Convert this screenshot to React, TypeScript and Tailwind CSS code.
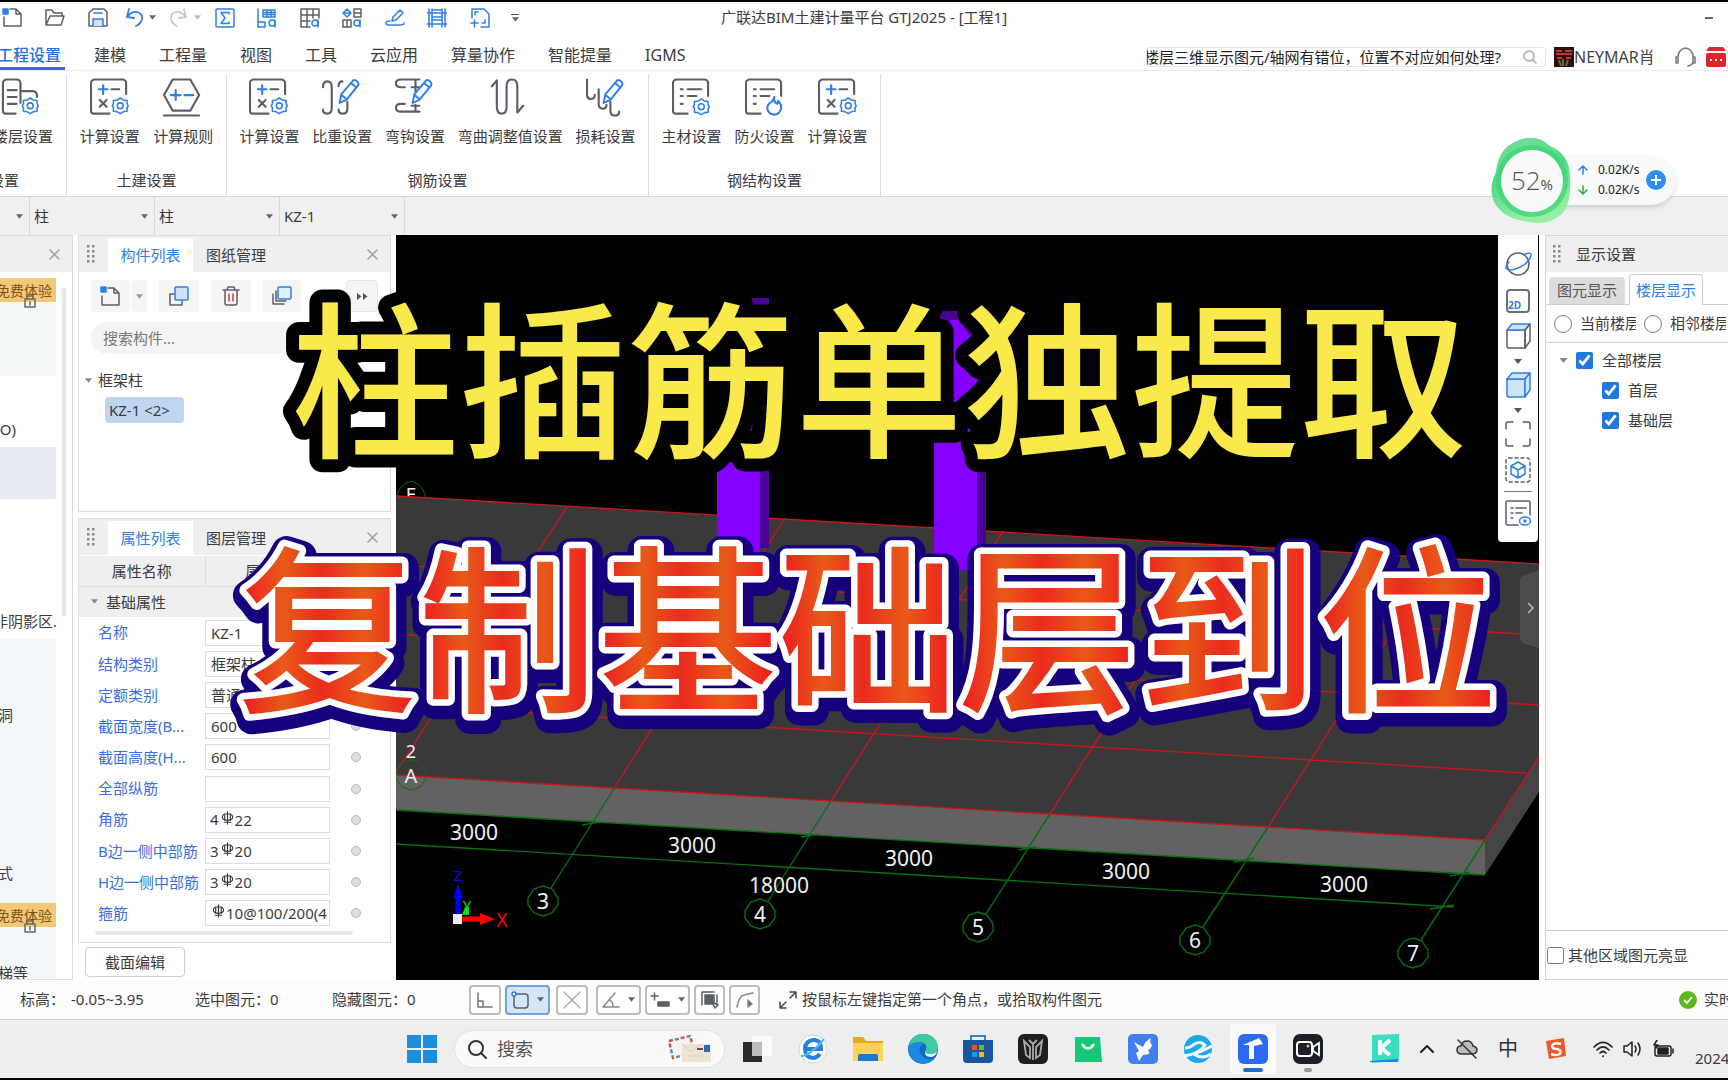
import React from "react";

type P = { children?: React.ReactNode };

const FONT = "font-['Noto_Sans','Noto_Sans_CJK_SC',sans-serif]";

function Ico({ w = 20, h = 20, vb, children, c = "#5b6068", sw = 1.5, cls = "" }: P & { w?: number; h?: number; vb?: string; c?: string; sw?: number; cls?: string }) {
  return (
    <svg width={w} height={h} viewBox={vb ?? `0 0 ${w} ${h}`} fill="none" stroke={c} strokeWidth={sw} strokeLinecap="round" strokeLinejoin="round" className={`shrink-0 ${cls}`} aria-hidden="true">
      {children}
    </svg>
  );
}

const BLUE = "#2f80e4";

function Caret({ c = "#666", w = 7 }: { c?: string; w?: number }) {
  return (
    <svg width={w} height={5} viewBox="0 0 8 5" className="shrink-0" aria-hidden="true">
      <path d="M0 0h8L4 5z" fill={c} />
    </svg>
  );
}

function Gear({ x, y }: { x: number; y: number }) {
  return (
    <g transform={`translate(${x} ${y})`} stroke={BLUE} strokeWidth="1.6">
      <path d="M0-8l3 2 4 .5 0 3.5 1.2 2L7 2v3.500l-4 .7L0 8l-3-1.800-4-.7V2L-8.200 0-7-2v-3.500l4-.5z" />
      <circle r="3" />
    </g>
  );
}

function Pencil() {
  return (
    <g stroke={BLUE} strokeWidth="2">
      <path d="M18 25l2-9L32 2q2-1 4 1 2 2 1 4L25 22z" fill="#fff" />
      <path d="M30 5l5 4M20 17l5 4" />
    </g>
  );
}

function RibbonIcon({ kind }: { kind: string }) {
  let body: React.ReactNode = null;
  if (kind === "calc")
    body = (
      <>
        <path d="M20 36H4a3 3 0 0 1-3-3V5a4 4 0 0 1 4-4h28a4 4 0 0 1 4 4v11" />
        <path d="M9 11h9M13.500 7v9" stroke={BLUE} />
        <path d="M22 11h8M10 22l7 7M17 22l-7 7" />
        <Gear x={31} y={28} />
      </>
    );
  if (kind === "rule")
    body = (
      <>
        <path d="M10 1h18l9 16-9 16H10L1 17zM1 38h36" />
        <path d="M8 17h10M13 12v10M22 17h9" stroke={BLUE} />
      </>
    );
  if (kind === "floor")
    body = (
      <>
        <path d="M16 36H6a3 3 0 0 1-3-3V5a4 4 0 0 1 4-4h10a4 4 0 0 1 4 4v20M21 13h13q4 0 4 6M8 12h9M8 19h9M8 26h9" />
        <Gear x={31} y={28} />
      </>
    );
  if (kind === "weight")
    body = (
      <>
        <path d="M1 9q0-6 4.500-6T10 9v21q0 6-4.500 6T1 32M17 8q0-5 4-5M26 24v7q0 5-4.500 5T17 32" />
        <Pencil />
      </>
    );
  if (kind === "hook")
    body = (
      <>
        <path d="M10 9H6Q1 9 1 5t5-4h19M21 2v11M10 26H6q-5 0-5 4t5 4h19M21 27v7M17 9h8M17 28h8" />
        <Pencil />
      </>
    );
  if (kind === "bend")
    body = <path d="M2 8l5-6v27q0 7 5 7t5-7V8q0-7 5.500-7T28 8v27l6-7" />;
  if (kind === "loss")
    body = (
      <>
        <path d="M1 1v15q0 5 4 5t4-4M13 11v15q0 5 4 5t4-4M25 24v9q0 5 4.500 5T34 34" />
        <Pencil />
      </>
    );
  if (kind === "main" || kind === "fire")
    body = (
      <>
        <path d="M16 36H4a3 3 0 0 1-3-3V5a4 4 0 0 1 4-4h28a4 4 0 0 1 4 4v13M9 11h2M16 11h14M9 18h2M16 18h9M9 26h2" />
        {kind === "main" ? <Gear x={30} y={29} /> : <path d="M30 19q-1 5 3 7 1-1 1-3 4 4 3 8-2 6-7 6t-7-5q-1-5 4-8 3-2 3-5z" stroke={BLUE} />}
      </>
    );
  return (
    <Ico w={40} h={39} vb="0 0 41 39" sw={2.2}>
      {body}
    </Ico>
  );
}

function RibbonGroup({ title, items, cls }: { title: string; items: [string, string][]; cls: string }) {
  return (
    <div className={`flex shrink-0 flex-col border-r border-[#dcdcdc] ${cls}`}>
      <div className="flex">
        {items.map(([k, t]) => (
          <button key={t} className="flex shrink-0 grow flex-col items-center gap-[7px]">
            <RibbonIcon kind={k} />
            <span className="whitespace-nowrap text-[15px] leading-6">{t}</span>
          </button>
        ))}
      </div>
      <div className="mt-5 text-center text-[15px] leading-6">{title}</div>
    </div>
  );
}

function Combo({ v, cls, label }: { v: string; cls: string; label: string }) {
  return (
    <div className={`relative flex h-full items-center border-r border-[#dadada] ${cls}`}>
      <select aria-label={label} className="h-full w-full appearance-none bg-transparent pl-1 text-[15px] outline-none">
        <option>{v}</option>
      </select>
      <span className="pointer-events-none absolute right-1.5">
        <Caret />
      </span>
    </div>
  );
}

function Dots() {
  return (
    <svg width="9" height="18" viewBox="0 0 9 18" fill="#8a8a8a" className="shrink-0" aria-hidden="true">
      {[0, 5, 10, 15].map((y) => (
        <g key={y}>
          <rect x="0" y={y} width="2.500" height="2.500" />
          <rect x="5" y={y} width="2.500" height="2.500" />
        </g>
      ))}
    </svg>
  );
}

function Close() {
  return (
    <button aria-label="关闭" className="p-1">
      <Ico w={11} h={11} c="#a3a3a3" sw={1.6}>
        <path d="M1 1l9 9M10 1l-9 9" />
      </Ico>
    </button>
  );
}

function PanelHeader({ a, b }: { a: string; b: string }) {
  return (
    <div className="flex h-9 shrink-0 items-center bg-[#efeff0] pl-2 pr-2">
      <Dots />
      <div className="ml-3 flex h-full grow pt-0.5">
        <button className="w-[85px] bg-white text-[15px] text-[#2f80e4]">{a}</button>
        <button className="w-[86px] text-[15px]">{b}</button>
      </div>
      <Close />
    </div>
  );
}

function Rebar() {
  return (
    <Ico w={13} h={14} vb="0 0 13 15" sw={1.2} c="#333" cls="mb-1 ml-0.5">
      <path d="M6.500 1v13M3.500 3v7M9.500 3v7M6.500 3q-5.500 0-5.500 3.500T6.500 10 12 6.500 6.500 3zM3 12h7" />
    </Ico>
  );
}

const PROPS: [string, string, string, boolean, boolean][] = [
  ["名称", "", "KZ-1", false, false],
  ["结构类别", "", "框架柱", false, false],
  ["定额类别", "", "普通柱", false, false],
  ["截面宽度(B...", "", "600", false, true],
  ["截面高度(H...", "", "600", false, true],
  ["全部纵筋", "", "", false, true],
  ["角筋", "4", "22", true, true],
  ["B边一侧中部筋", "3", "20", true, true],
  ["H边一侧中部筋", "3", "20", true, true],
  ["箍筋", "", "10@100/200(4", true, true],
];

function TrialBadge() {
  return (
    <div className="relative flex h-6 w-14 shrink-0 items-center justify-end bg-[#f0c878] pr-1 text-[#7d5414]">
      <span className="shrink-0 whitespace-nowrap text-[14px]">免费体验</span>
      <Ico w={12} h={14} cls="absolute left-6 top-4" c="#666">
        <path d="M1 5h10v8H1zM3 5V2h6v3M6 8v3" />
      </Ico>
    </div>
  );
}

function ClipText({ t, cls }: { t: string; cls: string }) {
  return (
    <div className={`flex shrink-0 items-center justify-end overflow-hidden whitespace-nowrap text-[15px] ${cls}`}>
      <span className="shrink-0">{t}</span>
    </div>
  );
}

function LeftStrip() {
  return (
    <aside className="flex w-[73px] shrink-0 flex-col overflow-hidden border-b border-r border-t border-[#dcdcdc]">
      <div className="flex h-9 shrink-0 items-center justify-end bg-[#efeff0] pr-2">
        <Close />
      </div>
      <div className="relative flex grow flex-col overflow-hidden pt-1.5">
        <div className="absolute left-[62px] top-4 h-82 w-1 bg-[#e6e6e6]" />
        <TrialBadge />
        <div className="h-[74px] w-14 shrink-0 bg-[#f3f7f8]" />
        <ClipText t="(ISO)" cls="mt-[35px] h-9 w-4" />
        <div className="h-[52px] w-14 shrink-0 bg-[#e8ecf2]" />
        <ClipText t="非阴影区." cls="mt-[110px] h-6 w-[57px]" />
        <div className="mt-1.5 flex w-14 grow flex-col bg-[#f4f7f9]">
          <ClipText t="洞" cls="mt-[62px] h-7 w-[13px]" />
          <ClipText t="式" cls="mt-[130px] h-7 w-[13px]" />
          <div className="mt-4 h-[50px] shrink-0">
            <TrialBadge />
          </div>
          <ClipText t="楼梯等" cls="mt-2 h-6 w-7" />
        </div>
      </div>
    </aside>
  );
}

const TB = "flex h-8 items-center justify-center rounded-sm bg-[#f5f5f5]";

function ComponentPanel() {
  return (
    <section className="flex h-[277px] shrink-0 flex-col border border-[#dcdcdc] bg-white">
      <PanelHeader a="构件列表" b="图纸管理" />
      <div className="mt-2 flex pl-3 pr-3">
        <button aria-label="新建" className={`${TB} w-[39px]`}>
          <Ico w={21} h={20}>
            <path d="M8 2h6l5 5v12H2V10M14 2v5h5" />
            <rect x="1" y="1" width="5" height="5" fill={BLUE} stroke={BLUE} />
          </Ico>
        </button>
        <button aria-label="新建选项" className={`${TB} ml-px w-4`}>
          <Caret c="#999" />
        </button>
        <button aria-label="复制" className={`${TB} ml-3 w-10`}>
          <Ico w={20} h={20}>
            <path d="M5 8H1v11h12v-4" />
            <rect x="6" y="1" width="13" height="13" rx="1" fill="#cfe3fa" stroke={BLUE} />
          </Ico>
        </button>
        <button aria-label="删除" className={`${TB} ml-3 w-10`}>
          <Ico w={18} h={20}>
            <path d="M1 4h16M5 4l1-3h6l1 3M3 4v13q0 2 2 2h8q2 0 2-2V4" />
            <path d="M7 8v7M11 8v7" stroke="#d43a3a" />
          </Ico>
        </button>
        <button aria-label="层间复制" className={`${TB} ml-3 w-[38px]`}>
          <Ico w={20} h={20}>
            <path d="M4 5v10h10M1 8v10h11" />
            <rect x="6" y="1" width="13" height="12" rx="1" fill="#e3effc" stroke={BLUE} />
          </Ico>
        </button>
        <button aria-label="更多" className={`${TB} ml-auto w-8 border border-[#e4e4e4]`}>
          <svg width="11" height="7" viewBox="0 0 11 7" aria-hidden="true">
            <path d="M0 0l4.500 3.500L0 7zM6 0l4.500 3.500L6 7z" fill="#555" />
          </svg>
        </button>
      </div>
      <input aria-label="搜索构件" placeholder="搜索构件..." className="ml-3 mr-3 mt-2.5 h-8 rounded-full bg-[#f4f4f4] px-3 text-[15px] outline-none placeholder:text-[#777]" />
      <div className="mt-3.5 flex items-center gap-1.5 pl-1.5 text-[15px] leading-6">
        <Caret c="#888" />
        框架柱
      </div>
      <div className="ml-[26px] mt-[5px] w-[79px] rounded bg-[#bed6f1] pl-1 text-[15px] leading-[26px]">KZ-1 &lt;2&gt;</div>
    </section>
  );
}

function PropertyPanel() {
  return (
    <section className="mt-1.5 flex h-[425px] shrink-0 flex-col border border-[#dcdcdc] bg-white">
      <PanelHeader a="属性列表" b="图层管理" />
      <table className="mt-px w-full table-fixed border-collapse text-[15px]">
        <thead className="bg-[#efeff0]">
          <tr className="h-[30px] border-b border-[#dedede]">
            <th className="w-[126px] border-r border-[#dedede] font-normal">属性名称</th>
            <th className="w-[125px] font-normal">属性值</th>
            <th className="font-normal"></th>
          </tr>
          <tr className="h-[31px]">
            <th colSpan={3} className="pl-3 text-left font-normal">
              <span className="flex items-center gap-2">
                <Caret c="#888" />
                基础属性
              </span>
            </th>
          </tr>
        </thead>
      </table>
      <table className="h-[312px] w-full table-fixed text-[15px]">
        <tbody>
          {PROPS.map(([n, pre, v, sym, dot]) => (
            <tr key={n}>
              <td className="w-[126px] whitespace-nowrap pl-[19px] text-[#3b6fe0]">{n}</td>
              <td className="w-[125px] p-0">
                <div className="flex h-[26px] w-full items-center overflow-hidden border border-[#dcdcdc] pl-1">
                  {pre}
                  {sym && <Rebar />}
                  <input aria-label={n} defaultValue={v} className="h-full w-0 grow bg-transparent pl-px outline-none" />
                </div>
              </td>
              <td>
                {dot && (
                  <span className="ml-[21px] block size-2.5 rounded-full border border-[#bbb] bg-[#dedede]" />
                )}
              </td>
            </tr>
          ))}
        </tbody>
      </table>
      <div className="ml-4 mt-0.5 h-1 w-[258px] shrink-0 rounded bg-[#e8e8e8]" />
    </section>
  );
}

function Scene() {
  const dims: [number, number, string][] = [
    [474, 840, "3000"], [692, 853, "3000"], [909, 866, "3000"], [1126, 879, "3000"], [1344, 892, "3000"], [779, 893, "18000"],
  ];
  const axes: [number, number, number, number, string][] = [
    [615, 787, 543, 901, "3"], [831, 801, 760, 914, "4"], [1050, 814, 978, 927, "5"], [1268, 827, 1195, 940, "6"], [1485, 840, 1413, 953, "7"],
  ];
  return (
    <svg viewBox="396 235 1143 745" preserveAspectRatio="xMinYMin slice" className="h-full w-full bg-black" role="img" aria-label="三维视图">
      <g fill="#f0f0f0" fontSize="21" textAnchor="middle" fontFamily="Noto Sans, sans-serif">
        <path d="M397 500q0-16 15-19 13 5 14 19" fill="none" stroke="#0d6b14" />
        <text x="411" y="502" fontSize="19">E</text>
        <path d="M396 496L1539 564V757L1485 840 396 775z" fill="#393939" />
        <path d="M396 775L1485 840V875L396 810z" fill="#626262" />
        <path d="M1485 840L1539 757V792L1485 875z" fill="#444" />
        <path d="M396 496L1539 564M396 565L1539 635M396 634L1539 705M396 705L1527 773M396 775L1485 840L1539 757M567 507L396 772M785 518L615 787M1003 531L831 801M1221 545L1050 814M1439 558L1268 827" fill="none" stroke="#c8161c" strokeWidth="1.4" />
        <path d="M750 305l2-7h17v250h-19z" fill="#4b0096" />
        <path d="M717 462h43v106h-43z" fill="#8400ff" />
        <path d="M939 311h19l28 30v229h-12z" fill="#4b0096" />
        <path d="M950 320h8l19 24v226h-43V442h16z" fill="#8400ff" />
        <path d="M396 810L1485 875M396 844L1454 907M582 825l18-3M801 837l18-3M1018 850l18-3M1234 862l20-4M1450 876l20-4M1430 909l24-4" fill="none" stroke="#086e0e" strokeWidth="1.4" />
        {axes.map(([x1, y1, x2, y2, t]) => (
          <g key={t}>
            <path d={`M${x1} ${y1}L${x2 + 8} ${y2 - 13}`} stroke="#086e0e" strokeWidth="1.4" />
            <path d={`M${x2} ${y2 - 15}l9 3 6 9v7l-6 8-9 3-9-3-6-8v-7l6-9z`} fill="#000" stroke="#086e0e" strokeWidth="1.4" />
            <text x={x2} y={y2 + 8}>{t}</text>
          </g>
        ))}
        <path d="M411 760l9 3 6 9v7l-6 8-9 3-9-3-6-8v-7l6-9z" fill="none" stroke="#0d6b14" />
        <text x="411" y="758" fontSize="18">2</text>
        <text x="411" y="783" fontSize="20">A</text>
        {dims.map(([x, y, t]) => (
          <text key={x} x={x} y={y}>{t}</text>
        ))}
        <path d="M458 918V895" stroke="#0000ff" strokeWidth="5" />
        <path d="M453 898l5-14 5 14z" fill="#0000ff" />
        <path d="M462 915l3-8h4v8z" fill="#00e010" />
        <path d="M458 919h24" stroke="#f00" strokeWidth="5" />
        <path d="M480 913l15 6-15 6z" fill="#f00" />
        <rect x="453" y="914" width="9" height="10" fill="#eee" />
        <text x="458" y="881" fontSize="15" fill="#0000ff">Z</text>
        <text x="467" y="911" fontSize="15" fill="#00e010">Y</text>
        <text x="502" y="927" fontSize="19" fill="#f00">X</text>
        <path d="M1539 570l-14 5q-5 2-5 7v54q0 6 5 8l14 4z" fill="#4c4c4c" />
        <path d="M1528 603l5 5-5 5" fill="none" stroke="#bbb" strokeWidth="1.5" />
      </g>
    </svg>
  );
}

function Cube({ fill }: { fill: string }) {
  const blue = fill !== "none";
  return (
    <Ico w={25} h={26} c={blue ? BLUE : "#5b6068"}>
      <path d="M1 7h18v18H3q-2 0-2-2z" fill={fill} />
      <path d="M1 7l5-6h18l-5 6z" fill="#cfe3fa" stroke={BLUE} />
      <path d="M24 1v17l-5 7V7z" fill={fill} />
    </Ico>
  );
}

function ViewTools() {
  return (
    <div className="absolute right-px top-0 flex h-[307px] w-10 flex-col items-center rounded-b bg-white pt-4">
      <button aria-label="动态观察">
        <Ico w={27} h={26}>
          <circle cx="13" cy="13" r="11" />
          <path d="M20 3q7-2 6 2-3 8-13 12T1 17q0-3 3-6" stroke={BLUE} />
        </Ico>
      </button>
      <button aria-label="二维" className="mt-3 flex h-6 w-6 items-end rounded-sm border-2 border-[#6b7078] text-[10px] font-bold leading-3 text-[#2f80e4]">2D</button>
      <button aria-label="视图方向" className="mt-2.5"><Cube fill="none" /></button>
      <span className="mt-2.5"><Caret c="#555" w={8} /></span>
      <button aria-label="显示模式" className="mt-2"><Cube fill="#cfe3fa" /></button>
      <span className="mt-2.5"><Caret c="#555" w={8} /></span>
      <button aria-label="全屏" className="mt-2">
        <Ico w={26} h={26}><path d="M1 8V3q0-2 2-2h5M18 1h5q2 0 2 2v5M25 18v5q0 2-2 2h-5M8 25H3q-2 0-2-2v-5" /></Ico>
      </button>
      <button aria-label="局部三维" className="mt-2.5">
        <Ico w={26} h={26}>
          <rect x="1" y="1" width="24" height="24" rx="3" strokeDasharray="3 3" />
          <path d="M13 5l7 4v8l-7 4-7-4V9zM6 9l7 4 7-4M13 13v8" stroke={BLUE} />
        </Ico>
      </button>
      <div className="mt-2 h-px w-7 shrink-0 bg-[#777]" />
      <button aria-label="显示设置" className="mt-2">
        <Ico w={27} h={27}>
          <path d="M13 25H3q-2 0-2-2V3q0-2 2-2h20q2 0 2 2v12M6 8h2M11 8h10M6 13h2M11 13h6M6 18h2" />
          <ellipse cx="20" cy="21" rx="5.500" ry="4" stroke={BLUE} />
          <circle cx="20" cy="21" r="1" stroke={BLUE} />
        </Ico>
      </button>
    </div>
  );
}

function Check({ t, cls }: { t: string; cls: string }) {
  return (
    <label className={`flex h-[30px] items-center gap-[9px] text-[15px] ${cls}`}>
      <input type="checkbox" defaultChecked className="size-[17px] accent-[#1f78e0]" />
      {t}
    </label>
  );
}

function DisplayPanel() {
  return (
    <aside className="ml-1.5 flex w-[183px] shrink-0 flex-col overflow-hidden border-b border-l border-t border-[#d4d4d4] bg-white">
      <div className="flex h-9 shrink-0 items-center gap-3.5 bg-[#efeff0] pl-[7px] text-[15px]">
        <Dots />
        显示设置
      </div>
      <div className="flex h-[33px] shrink-0 items-end border-b border-[#cfcfcf] pl-[3px] text-[15px]">
        <button className="h-[27px] w-[76px] rounded-t bg-[#dcdcdc] text-[#555]">图元显示</button>
        <button className="-mb-px ml-1 h-[31px] w-[74px] rounded-t border border-b-0 border-[#cfcfcf] bg-white text-[#2f80e4]">楼层显示</button>
      </div>
      <div className="flex h-[37px] shrink-0 items-center pl-2 text-[15px]">
        <label className="flex items-center gap-2">
          <input type="radio" name="floor" className="size-[18px]" />
          <span className="w-14 overflow-hidden whitespace-nowrap">当前楼层</span>
        </label>
        <label className="ml-2 flex items-center gap-2">
          <input type="radio" name="floor" className="size-[18px]" />
          <span className="w-14 overflow-hidden whitespace-nowrap">相邻楼层</span>
        </label>
      </div>
      <div className="grow border-b border-t border-[#cfcfcf] pt-0.5">
        <div className="flex items-center gap-2 pl-[13px]">
          <Caret c="#888" w={9} />
          <Check t="全部楼层" cls="" />
        </div>
        <Check t="首层" cls="pl-14" />
        <Check t="基础层" cls="pl-14" />
      </div>
      <label className="flex h-12 shrink-0 items-center gap-1 pl-px text-[15px]">
        <input type="checkbox" className="size-[17px] shrink-0" />
        <span className="whitespace-nowrap">其他区域图元亮显</span>
      </label>
    </aside>
  );
}

function Banner() {
  return (
    <svg viewBox="0 0 1728 745" preserveAspectRatio="xMidYMin meet" className="pointer-events-none absolute inset-x-0 top-0 h-[745px] w-full" fontFamily="Noto Sans CJK SC, sans-serif" fontWeight="500" strokeLinejoin="round">
      <defs>
        <linearGradient id="flame" gradientUnits="userSpaceOnUse" x1="238" y1="0" x2="418" y2="0" spreadMethod="repeat">
          <stop offset="0" stopColor="#ee1620" />
          <stop offset="0.250" stopColor="#e85a18" />
          <stop offset="0.470" stopColor="#ea2c1e" />
          <stop offset="0.700" stopColor="#e85a18" />
          <stop offset="1" stopColor="#ee1620" />
        </linearGradient>
        <text id="headline" x="238" y="463" fontSize="180">复制基础层到位</text>
      </defs>
      <text x="291" y="210" fontSize="168" fill="#fae94b" stroke="#000" strokeWidth="26" paintOrder="stroke">柱插筋单独提取</text>
      <g fill="#16007c" stroke="#16007c" strokeWidth="30" transform="translate(2 5)">
        <use href="#headline" />
      </g>
      <g fill="#fff" stroke="#fff" strokeWidth="13">
        <use href="#headline" />
      </g>
      <g fill="url(#flame)">
        <use href="#headline" />
      </g>
    </svg>
  );
}

function TitleBar() {
  return (
    <header className="flex h-[33px] shrink-0 items-center border-t-2 border-black pl-0.5">
      <button aria-label="新建">
        <Ico w={20} h={19}>
          <path d="M8 1h6l5 5v12H2V9M14 1v5h5" />
          <rect x="1" y="1" width="5" height="5" fill={BLUE} stroke={BLUE} />
        </Ico>
      </button>
      <button aria-label="打开" className="ml-[23px]">
        <Ico w={20} h={19}><path d="M1 17V2h6l2 3h8v3M1 17L5 8h14l-3 9z" /></Ico>
      </button>
      <button aria-label="保存" className="ml-[23px]">
        <Ico w={20} h={19}>
          <path d="M1 18V5l4-4h11l3 3v14z" />
          <path d="M5 18v-7h10v7M6 5h8" stroke={BLUE} fill="#cfe3fa" />
        </Ico>
      </button>
      <button aria-label="撤销" className="ml-[17px] flex items-center gap-1">
        <Ico w={20} h={19} c={BLUE} sw={1.8}><path d="M4 1l-2 8 7 1M2 9q5-6 10-5 6 2 5 7-1 5-6 7" /></Ico>
        <Caret />
      </button>
      <button aria-label="重做" className="ml-3 flex items-center gap-1.5">
        <Ico w={20} h={19} c="#c9c9c9" sw={1.8}><path d="M16 1l2 8-7 1M18 9Q13 3 8 4q-6 2-5 7 1 5 6 7" /></Ico>
        <Caret c="#bbb" />
      </button>
      <button aria-label="汇总计算" className="ml-3.5">
        <Ico w={20} h={20} c={BLUE}><rect x="1" y="1" width="18" height="18" rx="1" /><path d="M14 6V4.500H6l4 5.500-4 5.500h8V14" /></Ico>
      </button>
      <button aria-label="查看工程量" className="ml-[22px]">
        <Ico w={20} h={20} c={BLUE}><path d="M1 1v18h7v-5H1M6 2h12v7H6zM6 4.500h12M6 6.500h12M10 2v7M14 2v7" /><circle cx="15" cy="15" r="3" /><path d="M18 12v7" /></Ico>
      </button>
      <button aria-label="查看表格" className="ml-[23px]">
        <Ico w={20} h={20}><path d="M1 1h18v9M1 1v18h9M1 7h18M1 13h9M7 1v18M13 1v9" /><g stroke={BLUE}><circle cx="15" cy="15" r="3" /><path d="M18 12v7" /></g></Ico>
      </button>
      <button aria-label="云检查" className="ml-[22px]">
        <Ico w={20} h={20}><path d="M12 1h7v8h-7zM12 5h7M1 12h8v7H1zM5 12v7" /><g stroke={BLUE}><path d="M1 5l4-4 4 4-4 4zM1 5h8" /><circle cx="15" cy="15" r="3" /><path d="M18 12v7" /></g></Ico>
      </button>
      <button aria-label="编辑" className="ml-[23px]">
        <Ico w={20} h={20} c={BLUE}><path d="M7 13l1-4 7-7 3 3-7 7zM5 13q-4 0-4 2t3 2h12q3 0 3-2" /></Ico>
      </button>
      <button aria-label="构件" className="ml-[22px]">
        <Ico w={20} h={20} c={BLUE} sw={1.6}><path d="M2 1v18M5 1v18M15 1v18M18 1v18M0 5h20M5 2h10M5 9h10M5 12h10M0 16h20" /></Ico>
      </button>
      <button aria-label="添加页" className="ml-[23px]">
        <Ico w={20} h={20} c={BLUE}><path d="M2 10V1h12l5 5v13h-8M5 7V4h3M12 15h3v-3M1 15h7M4.500 12v7" /></Ico>
      </button>
      <button aria-label="自定义" className="ml-[21px] flex flex-col items-center gap-0.5">
        <span className="h-px w-2 bg-[#555]" />
        <Caret />
      </button>
      <h1 className="ml-[202px] whitespace-nowrap text-[15px]">广联达BIM土建计量平台 GTJ2025 - [工程1]</h1>
      <button aria-label="最小化" className="ml-auto mr-[15px] h-0.5 w-2 bg-[#666]" />
    </header>
  );
}

function TabRow() {
  return (
    <nav className="flex h-[38px] shrink-0 items-stretch border-b border-[#ececec] text-[16px]">
      <button className="flex w-[65px] items-center justify-end border-b-3 border-[#2272dd] pr-1 pt-2.5 font-medium text-[#2272dd]">
        <span className="shrink-0 whitespace-nowrap">工程设置</span>
      </button>
      <div className="ml-[29px] flex gap-[33px] pt-[7px]">
        {["建模", "工程量", "视图", "工具", "云应用", "算量协作", "智能提量", "IGMS"].map((t) => (
          <button key={t} className="shrink-0 whitespace-nowrap">{t}</button>
        ))}
      </div>
      <div className="ml-auto flex items-center pr-0.5 pt-2.5">
        <div className="flex h-5 w-[400px] items-center overflow-hidden rounded-sm border border-[#e6e6e6]">
          <input aria-label="搜索帮助" defaultValue="楼层三维显示图元/轴网有错位，位置不对应如何处理?" className="h-full w-0 grow -indent-[3px] text-[15px] text-[#222] outline-none" />
          <Ico w={14} h={14} c="#aaa" cls="mr-2"><circle cx="6" cy="6" r="5" /><path d="M10 10l3 3" /></Ico>
        </div>
        <svg width="20" height="20" className="ml-2" viewBox="0 0 20 20" aria-hidden="true">
          <path fill="#2b1210" d="M0 0h20v20H0z" />
          <path d="M2 4h6M11 4h7M2 7h16M3 11h5M12 11h5" stroke="#c0392b" strokeWidth="2" />
          <path d="M5 13l2 6M14 13l-2 6M9 12v7" stroke="#6d6a3a" strokeWidth="2" />
        </svg>
        <span className="w-[101px] text-[16px] text-[#444]">NEYMAR肖</span>
        <Ico w={21} h={20} c="#777"><path d="M3 12V9q1-7 7.500-8Q17 2 18 9v3M18 14q0 4-5 5M1 10h2v6H1zM18 10h2v6h-2z" /></Ico>
        <svg width="20" height="20" className="ml-2.5" viewBox="0 0 20 20" aria-hidden="true">
          <path d="M3 0h14l3 4H0z" fill="#e2242a" />
          <rect y="6" width="20" height="14" rx="2" fill="#e2242a" />
          <path d="M4 13h2M9 13h2M14 13h2" stroke="#fff" strokeWidth="2" />
        </svg>
      </div>
    </nav>
  );
}

function SpeedWidget() {
  return (
    <div className="absolute right-[52px] top-[137px] flex h-[86px] items-center">
      <div className="relative z-10 flex size-20 items-center justify-center">
        <svg className="absolute -inset-x-0.5 -inset-y-1" width="84" height="88" viewBox="0 0 84 88" aria-hidden="true">
          <defs>
            <linearGradient id="ring" x1="0" y1="0" x2="0.300" y2="1">
              <stop offset="0" stopColor="#5fd98c" />
              <stop offset="0.500" stopColor="#34d36f" />
              <stop offset="1" stopColor="#86ee97" />
            </linearGradient>
          </defs>
          <path d="M36 2Q50 0 60 10 80 18 80 42 82 66 72 78 58 90 40 86 14 84 4 66-2 52 6 36 8 8 36 2z" fill="url(#ring)" opacity="0.850" />
          <circle cx="42" cy="45" r="36" fill="#39d56f" opacity="0.700" />
          <circle cx="42" cy="45" r="31" fill="#fafafa" />
        </svg>
        <span className="relative text-[26px] text-[#555]">
          <span className="font-['Open_Sans'] font-light">52</span>
          <span className="text-[15px]">%</span>
        </span>
      </div>
      <div className="-ml-5 flex h-[50px] w-[124px] items-center rounded-r-full bg-[#f8f9fa] pl-[26px] shadow-md">
        <div className="flex flex-col font-['Noto_Sans'] text-[12px] leading-5 text-[#222]">
          <span className="flex items-center gap-2.5"><Ico w={10} h={10} c={BLUE}><path d="M5 9V1M1 5l4-4 4 4" /></Ico>0.02K/s</span>
          <span className="flex items-center gap-2.5"><Ico w={10} h={10} c="#2fa84f"><path d="M5 1v8M1 5l4 4 4-4" /></Ico>0.02K/s</span>
        </div>
        <svg width="20" height="20" viewBox="0 0 20 20" className="ml-[7px]" aria-hidden="true">
          <circle cx="10" cy="10" r="10" fill="#2f8df0" />
          <path d="M10 5v10M5 10h10" stroke="#fff" strokeWidth="2" />
        </svg>
      </div>
    </div>
  );
}

const SB = "flex h-[30px] shrink-0 items-center justify-center gap-2 rounded border-2 border-[#bdbdbd] bg-white";

function StatusBar() {
  return (
    <div className="flex h-[40px] shrink-0 items-center overflow-hidden whitespace-nowrap border-b border-[#cfcfcf] bg-[#fdfdfd] pl-5 text-[15px]">
      <span className="w-[51px]">标高：</span>
      <span className="w-[124px]">-0.05~3.95</span>
      <span className="w-[137px]">选中图元：0</span>
      <span className="w-[137px]">隐藏图元：0</span>
      <div className="flex">
        <button aria-label="正交" className={`${SB} w-8`}><Ico w={16} h={16} c="#777"><path d="M1 1v14h14M1 9h5v6" /></Ico></button>
        <button aria-label="矩形" className="ml-1 flex h-[30px] w-[45px] shrink-0 items-center justify-center gap-2 rounded border-2 border-[#6fa3de] bg-[#d5e6f9]"><Ico w={18} h={18}><rect x="3" y="3" width="14" height="14" rx="3" /><circle cx="3" cy="3" r="2" stroke={BLUE} fill="#fff" /></Ico><Caret /></button>
        <button aria-label="交点" className={`${SB} ml-1.5 w-8`}><Ico w={18} h={18} c="#aaa"><path d="M1 1l16 16M17 1L1 17" /></Ico></button>
        <button aria-label="角度" className={`${SB} ml-2 w-[45px]`}><Ico w={18} h={16} c="#888"><path d="M13 1L1 15h16M8 8q3 2 3 6" /></Ico><Caret /></button>
        <button aria-label="偏移" className={`${SB} ml-1 w-[45px]`}><Ico w={20} h={16}><path d="M1 4h7M4.500 1v7" /><rect x="8" y="10" width="11" height="4" fill="#5b6068" /></Ico><Caret /></button>
        <button aria-label="选择图元" className={`${SB} ml-1 w-[31px]`}><Ico w={18} h={18}><rect x="4" y="4" width="9" height="9" fill="#5b6068" /><path d="M1 14V1h12M16 4v8M11 11l6 3-3 3z" /></Ico></button>
        <button aria-label="折线" className={`${SB} ml-1 w-[31px]`}><Ico w={18} h={18} c="#888"><path d="M1 16Q3 5 8 4l9-2" /><path d="M12 9v7l4-3z" fill="#555" /></Ico></button>
      </div>
      <Ico w={20} h={20} cls="ml-[18px]" c="#444"><path d="M12 8l6-6M12 2h6v6M8 12l-6 6M2 12v6h6" /></Ico>
      <span className="ml-1">按鼠标左键指定第一个角点，或拾取构件图元</span>
      <div className="ml-auto flex w-[49px] items-center gap-[7px]">
        <svg width="18" height="18" viewBox="0 0 18 18" className="shrink-0" aria-hidden="true">
          <circle cx="9" cy="9" r="9" fill="#5cb81c" />
          <path d="M5 9l3 3 5-6" stroke="#fff" strokeWidth="1.800" fill="none" />
        </svg>
        实时
      </div>
    </div>
  );
}

function App30({ children, label, cls = "ml-[25px]" }: P & { label: string; cls?: string }) {
  return (
    <button aria-label={label} className={`shrink-0 ${cls}`}>
      <svg width="30" height="30" viewBox="0 0 30 30" aria-hidden="true">{children}</svg>
    </button>
  );
}

function Taskbar() {
  return (
    <footer className="flex h-[60px] shrink-0 items-center overflow-hidden border-b-2 border-black bg-[#eeeeee] pl-[407px]">
      <App30 label="开始" cls="">
        <path d="M0 1h14v13H0zM16 1h14v13H16zM0 16h14v13H0zM16 16h14v13H16z" fill="#1a8fe0" />
      </App30>
      <label className="ml-[17px] flex h-[38px] w-[271px] shrink-0 items-center rounded-full border border-[#e2e2e2] bg-[#fafafa] pl-3 pr-3">
        <Ico w={20} h={20} c="#333" sw={2}><circle cx="9" cy="9" r="7" /><path d="M14 14l5 5" /></Ico>
        <input aria-label="搜索" placeholder="搜索" className="ml-2.5 w-0 grow bg-transparent text-[18px] outline-none placeholder:text-[#555]" />
        <svg width="44" height="28" viewBox="0 0 44 28" aria-hidden="true">
          <path d="M1 6l21-5 5 16-22 6z" fill="#f3f3f3" />
          <path d="M1 6l21-5 5 16-22 6z" fill="none" stroke="#d2573f" strokeWidth="2.500" strokeDasharray="4 8" />
          <path d="M1 6l21-5 5 16-22 6z" fill="none" stroke="#4a90d0" strokeWidth="2.500" strokeDasharray="4 8" strokeDashoffset="6" />
          <path d="M14 9h29v18H14z" fill="#f0e3d3" />
          <path d="M14 9l9 8 10-8M20 21h14" stroke="#dccbb8" fill="none" />
          <path d="M36 10h6v7h-6z" fill="#2e6bb0" />
          <path d="M29 14h6" stroke="#555" strokeWidth="2" />
        </svg>
      </label>
      <App30 label="任务视图" cls="ml-[17px]">
        <path d="M10 2h20v20H10z" fill="#fafafa" /><path d="M1 8h19v20H1z" fill="#2b2b2b" /><path d="M10 8h10v14H10z" fill="#bdbdbd" />
      </App30>
      <App30 label="浏览器" cls="ml-[26px]">
        <circle cx="15" cy="15" r="14" fill="#fff" stroke="#cdd6e0" /><path d="M22 20q-3 4-7 4-8-1-8-9t8-9 8 9H8" stroke="#2280e0" strokeWidth="4" fill="none" /><path d="M3 22Q12 22 26 5" stroke="#53b9f5" strokeWidth="2" fill="none" />
      </App30>
      <App30 label="文件资源管理器">
        <path d="M0 3h10l3 4h17v20H0z" fill="#e8a921" /><path d="M0 9h30v18H0z" fill="#fcd354" /><path d="M5 27v-5q0-2 2-2h16q2 0 2 2v5z" fill="#1b78d2" />
      </App30>
      <App30 label="Edge">
        <circle cx="15" cy="15" r="15" fill="#1668c4" /><path d="M1 12Q4 0 15 0q13 0 15 13 0 7-8 7-6 0-4-4 2-7-6-8-7 0-11 4z" fill="#3ec9a0" /><path d="M1 12q8-7 14-2-5 3-3 9 4 8 14 6-8 7-17 3Q-1 24 1 12z" fill="#1b8be0" /><path d="M18 15q-2 5 4 5 5 0 7-3-1 6-7 6-7-1-4-8z" fill="#eef" />
      </App30>
      <App30 label="应用商店" cls="ml-[25px]">
        <path d="M8 7V2h14v5" fill="none" stroke="#2b8ad0" strokeWidth="2" /><path d="M0 6h30v19q0 4-4 4H4q-4 0-4-4z" fill="#1b559e" /><path d="M9 11h5v5H9z" fill="#f25022" /><path d="M16 11h5v5h-5z" fill="#7fba00" /><path d="M9 18h5v5H9z" fill="#00a4ef" /><path d="M16 18h5v5h-5z" fill="#ffb900" />
      </App30>
      <App30 label="加速器">
        <rect width="30" height="30" rx="6" fill="#1d1e20" /><path d="M6 7l6 6v11l-4-3zM24 7l-6 6v11l4-3zM15 10v16M11 6l4 4 4-4" fill="none" stroke="#aaa" strokeWidth="1.800" />
      </App30>
      <App30 label="应用市场" cls="ml-[25px]">
        <path d="M2 3h25l2 25H2z" fill="#19c877" /><path d="M9 10q6 9 12 0" stroke="#fff" strokeWidth="2.500" fill="none" />
      </App30>
      <App30 label="飞鸟">
        <rect width="30" height="30" rx="5" fill="#3f7ff2" /><path d="M6 8l9 5q2-6 8-9-2 4 1 7-1 4-4 5 2 2 1 4l-6 1-4 6-3-8 3-2z" fill="#fff" />
      </App30>
      <App30 label="极速浏览器">
        <circle cx="15" cy="15" r="14" fill="#1ba8e8" /><path d="M1 22Q16 20 22 11q-5-5-12 0-3 3-8 3M29 12q-9 5-18 8 8 6 17 0" fill="none" stroke="#eef8ff" strokeWidth="3" />
      </App30>
      <div className="relative ml-[17px] flex h-[50px] w-[46px] shrink-0 items-center justify-center rounded bg-[#fafafa]">
        <App30 label="GTJ" cls=""><rect width="30" height="30" rx="6" fill="#2a6bf2" /><path d="M5 11l16-7 4 6-9 2v13h-5V11z" fill="#fff" /></App30>
        <span className="absolute bottom-0.5 h-1 w-5 rounded bg-[#1a73c8]" />
      </div>
      <div className="relative ml-4 flex h-[50px] w-8 shrink-0 items-center justify-center">
        <App30 label="录屏" cls=""><rect width="30" height="30" rx="7" fill="#1b1f29" /><rect x="4" y="8" width="15" height="14" rx="3" stroke="#fff" strokeWidth="2" fill="none" /><path d="M20 13l6-4v12l-6-4z" stroke="#fff" strokeWidth="1.800" fill="none" /><circle cx="15" cy="12" r="1.500" fill="#f0c040" /></App30>
        <span className="absolute bottom-0.5 h-1 w-2 rounded bg-[#999]" />
      </div>
      <App30 label="K" cls="ml-[46px]">
        <path d="M2 1l27-1v27L2 29z" fill="#3adfc0" /><path d="M0 27l28-2v3H0z" fill="#1a86f0" /><path d="M10 6v15M20 6l-9 8 9 7" stroke="#fff" strokeWidth="4" fill="none" />
      </App30>
      <Ico w={14} h={10} c="#222" cls="ml-5" sw={2}><path d="M1 8l6-6 6 6" /></Ico>
      <Ico w={22} h={20} c="#333" cls="ml-[22px]" sw={1.5}><path d="M6 15q-5 0-5-4t4-4q1-5 6-5t6 5q4 1 4 4t-4 4z" fill="#bbb" /><path d="M2 1l18 18" /></Ico>
      <span className="ml-5 text-[20px] text-[#333]">中</span>
      <svg width="22" height="22" viewBox="0 0 22 22" className="ml-[27px] shrink-0" aria-hidden="true">
        <path d="M1 3l18-3 2 18-17 3z" fill="#ea5a28" />
        <path d="M16 6q-8-2-9 2 0 3 5 3 5 1 3 5-4 2-9 0" stroke="#fff" strokeWidth="2.500" fill="none" />
      </svg>
      <Ico w={20} h={18} c="#222" cls="ml-[26px]" sw={1.7}><path d="M1 7q9-9 18 0M4 10q6-6 12 0M7 13q3-3 6 0M10 16v.5" /></Ico>
      <Ico w={18} h={18} c="#222" cls="ml-[10px]"><path d="M1 6h3l5-4v14l-5-4H1zM12 6q2 3 0 6M15 3q4 6 0 12" /></Ico>
      <Ico w={22} h={18} c="#222" cls="ml-3"><rect x="2" y="6" width="16" height="10" rx="2" /><rect x="5" y="8" width="10" height="6" fill="#222" /><path d="M20 9v4M4 0L1 5h4L3 8" /></Ico>
      <span className="ml-5 mt-[18px] whitespace-nowrap text-[15px]">2024-</span>
    </footer>
  );
}

export default function App() {
  return (
    <div className={`relative flex h-screen flex-col overflow-hidden bg-white text-[#3c3c3c] ${FONT}`}>
      <TitleBar />
      <TabRow />
      <div className="flex h-[125px] shrink-0 items-stretch overflow-hidden pt-[3px]">
        <div className="flex w-[67px] shrink-0 flex-col border-r border-[#dcdcdc] pt-1">
          <button className="flex flex-col items-start gap-[7px]">
            <RibbonIcon kind="floor" />
            <ClipText t="楼层设置" cls="h-6 w-[53px]" />
          </button>
          <ClipText t="工程设置" cls="mt-5 h-6 w-[19px]" />
        </div>
        <RibbonGroup cls="w-[160px] px-1.5 pt-1" title="土建设置" items={[["calc", "计算设置"], ["rule", "计算规则"]]} />
        <RibbonGroup cls="w-[422px] px-1.5 pt-1" title="钢筋设置" items={[["calc", "计算设置"], ["weight", "比重设置"], ["hook", "弯钩设置"], ["bend", "弯曲调整值设置"], ["loss", "损耗设置"]]} />
        <RibbonGroup cls="w-[232px] px-1.5 pt-1" title="钢结构设置" items={[["main", "主材设置"], ["fire", "防火设置"], ["calc", "计算设置"]]} />
      </div>
      <div className="flex h-[39px] shrink-0 items-center border-t border-[#dadada] bg-[#f0f0f0]">
        <Combo v="" label="楼层" cls="w-[30px]" />
        <Combo v="柱" label="构件类型" cls="w-[125px]" />
        <Combo v="柱" label="构件" cls="w-[125px]" />
        <Combo v="KZ-1" label="名称" cls="w-[125px]" />
      </div>
      <main className="relative flex min-h-0 grow">
        <LeftStrip />
        <div className="ml-[5px] mr-[5px] flex w-[313px] shrink-0 flex-col">
          <ComponentPanel />
          <PropertyPanel />
          <button className="ml-[7px] mt-1 h-[30px] w-[100px] shrink-0 rounded border border-[#cfcfcf] text-[15px]">截面编辑</button>
        </div>
        <div className="relative min-w-0 grow">
          <Scene />
          <ViewTools />
        </div>
        <DisplayPanel />
        <Banner />
      </main>
      <StatusBar />
      <Taskbar />
      <SpeedWidget />
    </div>
  );
}
